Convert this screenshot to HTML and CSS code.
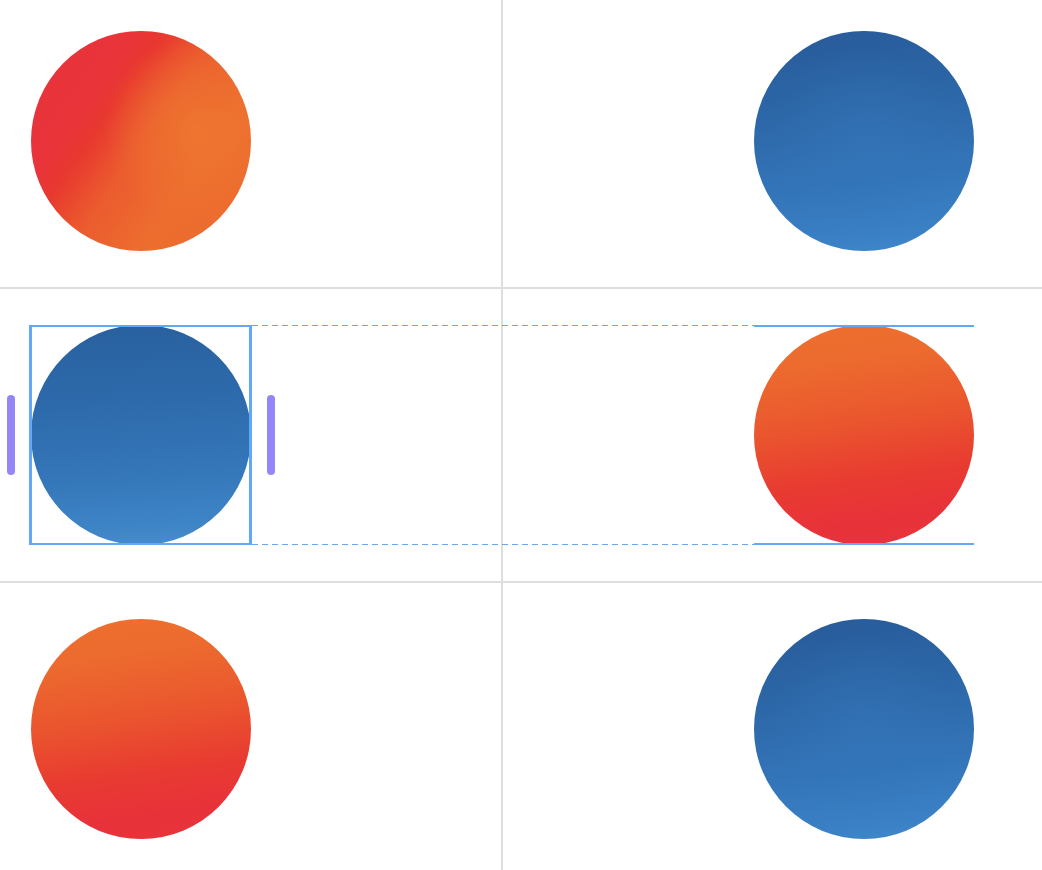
FILE: index.html
```html
<!DOCTYPE html>
<html lang="en">
<head>
<meta charset="utf-8">
<title>Motion preview</title>
<link rel="stylesheet" href="styles.css">
</head>
<body>
<div class="grid">
  <div class="cell left row-first"><div class="dot warm-diag"></div></div>
  <div class="cell right row-first"><div class="dot cool"></div></div>
  <div class="cell left row-next"><div class="dot cool-b"></div></div>
  <div class="cell right row-next"><div class="dot warm"></div></div>
  <div class="cell left row-next"><div class="dot warm"></div></div>
  <div class="cell right row-next"><div class="dot cool"></div></div>

  <div class="overlay">
    <div class="handle handle-l"></div>
    <div class="sel-box"></div>
    <div class="handle handle-r"></div>
    <div class="dash dash-top"></div>
    <div class="dash dash-bottom"></div>
    <div class="target target-top"></div>
    <div class="target target-bottom"></div>
  </div>
</div>
</body>
</html>
```

FILE: styles.css
```css
html, body {
  margin: 0;
  padding: 0;
  background: #ffffff;
  font-family: "Liberation Sans", Arial, sans-serif;
}

.grid {
  position: relative;
  display: grid;
  grid-template-columns: 501px 1fr;
  grid-template-rows: 287px 292px 1fr;
  gap: 2px;
  height: 870px;
  background: #e0dddd;
  overflow: hidden;
}

.cell {
  background: #ffffff;
  box-sizing: border-box;
}

.left { padding-left: 31px; }
.right { padding-left: 251px; }
.row-first { padding-top: 31px; }
.row-next { padding-top: 36px; }

.dot {
  width: 220px;
  height: 220px;
  border-radius: 50%;
}

.warm-diag {
  background:
    radial-gradient(circle at 75% 45%, rgba(238, 118, 48, 0.9) 0%, rgba(238, 118, 48, 0) 45%),
    linear-gradient(125deg, #e9323c 0%, #e9343a 28%, #e8382f 36%, #eb5a2e 50%, #ed6d2f 70%, #ec6a2e 100%);
}

.warm {
  background: linear-gradient(172deg, #ee702f 0%, #ec6a2e 20%, #ea552e 45%, #e83a31 68%, #e8323a 85%, #e8343c 100%);
}

.cool {
  background:
    radial-gradient(circle at 50% 50%, rgba(52, 118, 186, 0.5) 0%, rgba(52, 118, 186, 0) 60%),
    linear-gradient(172deg, #285a99 0%, #2c67a8 35%, #3374b8 65%, #3b81c6 90%, #428acd 100%);
}

.cool-b {
  background: linear-gradient(176deg, #29609e 0%, #2d6aab 35%, #3476b8 65%, #3d84c6 88%, #4a8ecd 100%);
}

.overlay {
  position: absolute;
  left: 0;
  right: 0;
  top: 325px;
  height: 220px;
  pointer-events: none;
}

.sel-box {
  position: absolute;
  left: 29px;
  top: 0;
  width: 223px;
  height: 220px;
  box-sizing: border-box;
  border-style: solid;
  border-color: #62a8f6;
  border-width: 2px 3px;
}

.handle {
  position: absolute;
  top: 70px;
  width: 8px;
  height: 80px;
  border-radius: 4px;
  background: #9387f8;
}

.handle-l { left: 7px; }
.handle-r { left: 267px; }

.dash {
  position: absolute;
  left: 252px;
  width: 502px;
  height: 1px;
  background: repeating-linear-gradient(90deg, #6aa8ec 0 6px, transparent 6px 10px);
}

.dash-top { top: 0; }
.dash-bottom { top: 219px; }

.target {
  position: absolute;
  left: 754px;
  width: 220px;
  height: 2px;
  background: #62a8f6;
}

.target-top { top: 0; }
.target-bottom { top: 218px; }
```
